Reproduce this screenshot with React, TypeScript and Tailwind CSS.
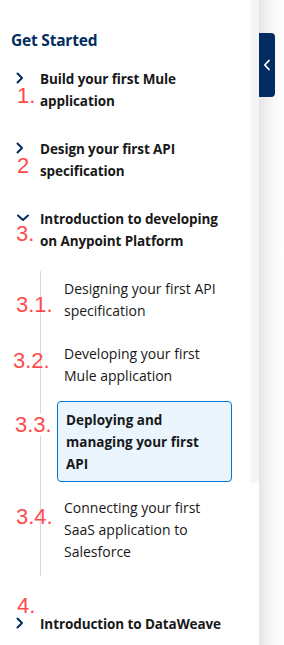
import React from 'react';

type SubItem = { lines: string[]; active?: boolean; gap: string };

const ChevronRight: React.FC<{ className?: string }> = ({ className }) => (
    <svg width="8" height="12" viewBox="0 0 8 12" className={className} fill="none">
        <path d="M1.5 1.5 L6 6 L1.5 10.5" stroke="#032d60" strokeWidth="2" strokeLinecap="round" strokeLinejoin="round" />
    </svg>
);

const ChevronDown: React.FC<{ className?: string }> = ({ className }) => (
    <svg width="12" height="8" viewBox="0 0 12 8" className={className} fill="none">
        <path d="M1 1.5 L6 6 L11 1.5" stroke="#032d60" strokeWidth="2" strokeLinecap="round" strokeLinejoin="round" />
    </svg>
);

const Section: React.FC<{ open?: boolean; children: React.ReactNode; className?: string }> = ({ open, children, className }) => (
    <div className={`flex ${className ?? ''}`}>
        <div className="w-[29px] shrink-0 pt-[4px]">
            {open ? <ChevronDown className="ml-[6px] mt-[2px]" /> : <ChevronRight className="ml-[5px]" />}
        </div>
        <div className="text-[13.5px] leading-[22px] font-bold text-[#181818] font-['Open_Sans',sans-serif] tracking-[-0.1px]">{children}</div>
    </div>
);

const subItems: SubItem[] = [
    { lines: ['Designing your first API', 'specification'], gap: 'mt-0' },
    { lines: ['Developing your first', 'Mule application'], gap: 'mt-[21px]' },
    { lines: ['Deploying and', 'managing your first', 'API'], active: true, gap: 'mt-[14px]' },
    { lines: ['Connecting your first', 'SaaS application to', 'Salesforce'], gap: 'mt-[15px]' },
];

// red hand-written step numbers that sit over the nav
const marks = [
    { text: '1.', top: 'top-[85px]', left: 'left-[17px]' },
    { text: '2', top: 'top-[155px]', left: 'left-[17px]' },
    { text: '3.', top: 'top-[223px]', left: 'left-[16px]' },
    { text: '3.1.', top: 'top-[294px]', left: 'left-[16px]' },
    { text: '3.2.', top: 'top-[350px]', left: 'left-[13px]' },
    { text: '3.3.', top: 'top-[414px]', left: 'left-[15px]' },
    { text: '3.4.', top: 'top-[506px]', left: 'left-[16px]' },
    { text: '4.', top: 'top-[595px]', left: 'left-[17px]' },
];

const App: React.FC = () => {
    return (
        <div className="flex w-[284px] h-[645px] overflow-hidden bg-white">
            <div className="relative w-[251px] shrink-0 bg-white pt-[30px] pl-[11px]">
                <h2 className="text-[15.5px] leading-[20px] font-bold text-[#032d60] font-['Open_Sans',sans-serif] tracking-[-0.2px]">Get Started</h2>

                <Section className="mt-[18px]">Build your first Mule<br />application</Section>
                <Section className="mt-[26px]">Design your first API<br />specification</Section>
                <Section open className="mt-[26px]">Introduction to developing<br />on Anypoint Platform</Section>

                <div className="ml-[29px] mt-[19px] border-l border-[#d8d8d8] pt-[7px] pb-[13px] font-['Open_Sans',sans-serif] text-[14px] leading-[22px] text-[#181818]">
                    {subItems.map(item =>
                        item.active ? (
                            <div key={item.lines[0]} className={`${item.gap} ml-[16px] w-[175px] rounded-[4px] border border-[#0176d3] bg-[#eaf5fe] pl-[8px] pt-[7px] pb-[6px] font-bold text-[13.5px]`}>
                                {item.lines.map(l => <div key={l}>{l}</div>)}
                            </div>
                        ) : (
                            <div key={item.lines[0]} className={`${item.gap} pl-[23px]`}>
                                {item.lines.map(l => <div key={l}>{l}</div>)}
                            </div>
                        )
                    )}
                </div>

                <Section className="mt-[37px]">Introduction to DataWeave</Section>

                {marks.map(m => (
                    <span
                        key={m.text}
                        className={`absolute ${m.top} ${m.left} text-[22px] leading-[22px] text-[#ff4b4b] font-['Liberation_Sans',sans-serif] ${m.text === '3.3.' ? 'bg-white' : ''}`}
                    >
                        {m.text}
                    </span>
                ))}
            </div>

            <div className="w-[8px] shrink-0 flex flex-col">
                <div className="h-[483px] bg-[#f4f5f7]" />
            </div>

            <div className="flex-1 bg-gradient-to-r from-[#e6e6e6] via-[#f6f6f6] to-white pt-[33px]">
                <div className="w-[16px] h-[64px] bg-[#032d60] rounded-r-[4px] flex items-center justify-center">
                    <svg width="8" height="12" viewBox="0 0 8 12" fill="none">
                        <path d="M6 1.5 L1.8 6 L6 10.5" stroke="white" strokeWidth="1.8" strokeLinecap="round" strokeLinejoin="round" />
                    </svg>
                </div>
            </div>
        </div>
    );
};

export default App;
